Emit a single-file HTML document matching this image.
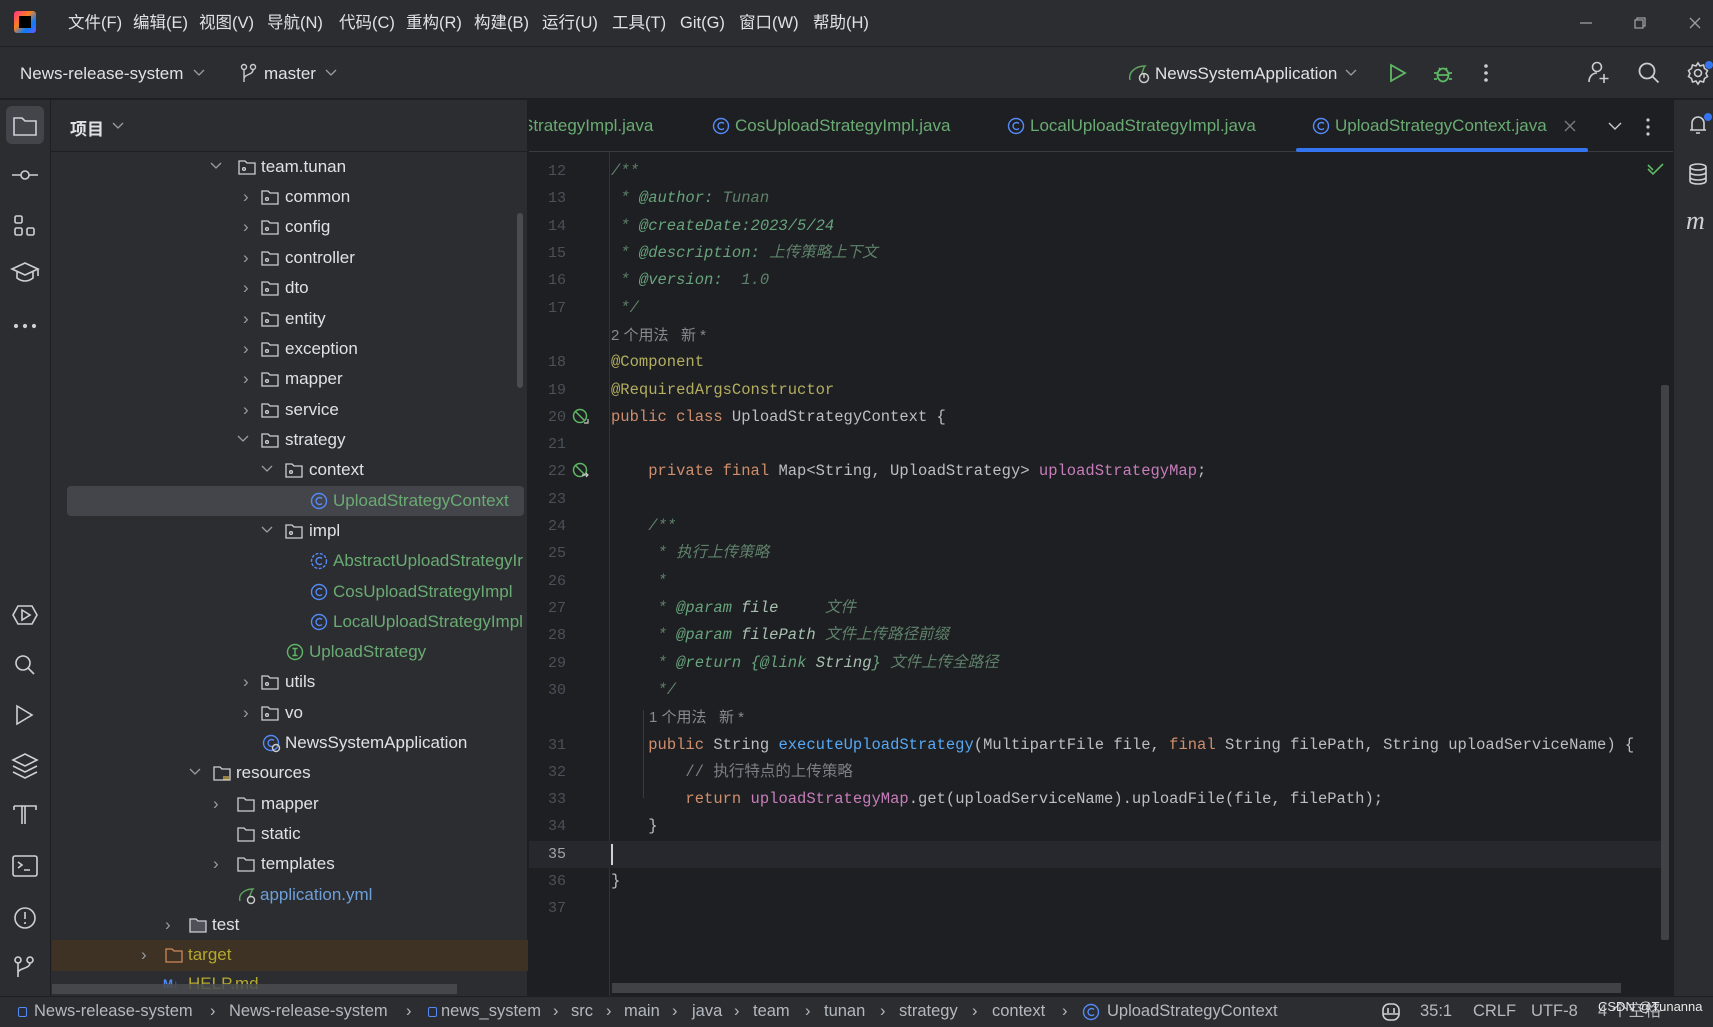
<!DOCTYPE html>
<html><head><meta charset="utf-8">
<style>
*{margin:0;padding:0;box-sizing:border-box}
body{width:1713px;height:1027px;overflow:hidden;background:#1e1f22;font-family:"Liberation Sans","Noto Sans CJK SC",sans-serif;color:#dfe1e5;position:relative}
.a{position:absolute}
.ui{font-size:16.5px;white-space:nowrap;line-height:24px;height:24px}
.row{position:absolute;height:30px;line-height:30px;font-size:17px;white-space:nowrap;color:#dfe1e5}
.chev{position:absolute;top:9px}
.fi{position:absolute;top:7px}
.code{position:absolute;left:611px;height:27px;line-height:27px;font-family:"Liberation Mono","Noto Sans CJK SC",monospace;font-size:15.5px;white-space:pre;color:#bcbec4}
.ln{position:absolute;left:520px;width:46px;text-align:right;height:27px;line-height:27px;font-family:"Liberation Mono",monospace;font-size:15px;color:#4b5059}
.k{color:#cf8e6d}.an{color:#b3ae60}.cm{color:#5f826b;font-style:italic}.tg{color:#67a37c;font-style:italic}.tv{color:#a8c0b0;font-style:italic}.f{color:#c77dbb}.m{color:#56a8f5}.gc{color:#7a7e85}
.hint{position:absolute;height:27px;line-height:27px;font-size:15px;color:#868a91;white-space:pre}
.g{color:#6aab73}
.sb{position:absolute;top:996px;height:31px;line-height:31px;font-size:16.5px;color:#b4b8bf;white-space:nowrap}
</style></head><body>
<!-- title bar -->
<div class="a" style="left:0;top:0;width:1713px;height:47px;background:#2b2d30;border-bottom:1px solid #1e1f22"></div>
<div class="a" style="left:14px;top:11px;width:22px;height:22px;background:linear-gradient(135deg,#ff318c,#fc801d 40%,#087cfa 70%,#6b57ff);border-radius:3px"><div style="position:absolute;left:5px;top:5px;width:12px;height:12px;background:#000"></div></div>
<div class="ui a" style="top:11px;left:68px">文件(F)</div>
<div class="ui a" style="top:11px;left:133px">编辑(E)</div>
<div class="ui a" style="top:11px;left:199px">视图(V)</div>
<div class="ui a" style="top:11px;left:267px">导航(N)</div>
<div class="ui a" style="top:11px;left:339px">代码(C)</div>
<div class="ui a" style="top:11px;left:406px">重构(R)</div>
<div class="ui a" style="top:11px;left:474px">构建(B)</div>
<div class="ui a" style="top:11px;left:542px">运行(U)</div>
<div class="ui a" style="top:11px;left:612px">工具(T)</div>
<div class="ui a" style="top:11px;left:680px">Git(G)</div>
<div class="ui a" style="top:11px;left:739px">窗口(W)</div>
<div class="ui a" style="top:11px;left:813px">帮助(H)</div>
<svg class="a" style="left:1578px;top:15px" width="130" height="16" fill="none" stroke="#9a9da3" stroke-width="1.3"><path d="M2 8h12"/><path d="M57 5h8v8h-8z M59 5v-2h8v8h-2"/><path d="M112 3l10 10M122 3l-10 10"/></svg>
<!-- toolbar -->
<div class="a" style="left:0;top:47px;width:1713px;height:52px;background:#2b2d30;border-bottom:1px solid #1e1f22"></div>
<div class="ui a" style="top:62px;left:20px;font-size:17px">News-release-system</div>
<svg class="a" style="left:193px;top:69px" width="12" height="8" fill="none" stroke="#9a9da3" stroke-width="1.3"><path d="M1 1l5 5 5-5"/></svg>
<svg class="a" style="left:240px;top:63px" width="18" height="20" fill="none" stroke="#c9ccd1" stroke-width="1.4"><circle cx="4" cy="4" r="2.5"/><circle cx="13" cy="4" r="2.5"/><path d="M4 7v12M13 7c0 5-9 4-9 9"/></svg>
<div class="ui a" style="top:62px;left:264px;font-size:17px">master</div>
<svg class="a" style="left:325px;top:69px" width="12" height="8" fill="none" stroke="#9a9da3" stroke-width="1.3"><path d="M1 1l5 5 5-5"/></svg>
<svg class="a" style="left:1127px;top:62px" width="24" height="22" fill="none" stroke="#5fa35f" stroke-width="1.5"><path d="M3 18c-2-8 6-14 15-14-2 2-2 6-4 9"/><circle cx="17" cy="16" r="4.5" stroke="#ccc"/><path d="M17 12v4" stroke="#ccc"/></svg>
<div class="ui a" style="top:62px;left:1155px;font-size:17px">NewsSystemApplication</div>
<svg class="a" style="left:1345px;top:69px" width="12" height="8" fill="none" stroke="#9a9da3" stroke-width="1.3"><path d="M1 1l5 5 5-5"/></svg>
<svg class="a" style="left:1388px;top:63px" width="20" height="20" fill="none" stroke="#5fb865" stroke-width="1.8"><path d="M3 2l14 8-14 8z"/></svg>
<svg class="a" style="left:1432px;top:62px" width="22" height="22" fill="none" stroke="#5fb865" stroke-width="1.8"><ellipse cx="11" cy="13" rx="5.5" ry="6.5"/><path d="M7 6l2 2M15 6l-2 2M2 11h3M17 11h3M2 17h3M17 17h3M5.5 13h11"/></svg>
<svg class="a" style="left:1482px;top:62px" width="8" height="22" fill="#c9ccd1"><circle cx="4" cy="4" r="1.8"/><circle cx="4" cy="11" r="1.8"/><circle cx="4" cy="18" r="1.8"/></svg>
<svg class="a" style="left:1587px;top:60px" width="24" height="26" fill="none" stroke="#c9ccd1" stroke-width="1.6"><circle cx="10" cy="7" r="4.5"/><path d="M2 22c0-6 4-9 8-9M17 14v9M12.5 18.5h9"/></svg>
<svg class="a" style="left:1637px;top:61px" width="24" height="24" fill="none" stroke="#c9ccd1" stroke-width="1.8"><circle cx="10" cy="10" r="7.5"/><path d="M15.5 15.5l6 6"/></svg>
<svg class="a" style="left:1686px;top:60px" width="27" height="26" fill="none" stroke="#c9ccd1" stroke-width="1.6"><circle cx="12" cy="13" r="3.5"/><path d="M12 3l2 3 3.5-1 1 3.5 3 2-1.5 3 1.5 3-3 2-1 3.5-3.5-1-2 3-2-3-3.5 1-1-3.5-3-2 1.5-3-1.5-3 3-2 1-3.5 3.5 1z"/><circle cx="23" cy="5" r="4" fill="#3574f0" stroke="none"/></svg>
<!-- left strip -->
<div class="a" style="left:0;top:100px;width:51px;height:896px;background:#2b2d30;border-right:1px solid #1e1f22"></div>
<div class="a" style="left:6px;top:106px;width:38px;height:38px;background:#43454a;border-radius:6px"></div>
<svg class="a" style="left:0;top:100px" width="50" height="896" fill="none" stroke="#ced0d6" stroke-width="1.6">
<path d="M14 18h8l3 3h11v14h-22z"/>
<path d="M12 75h9M29 75h9"/><circle cx="25" cy="75" r="4"/>
<rect x="15" y="116" width="7" height="7" rx="1.5"/><rect x="15" y="128" width="7" height="7" rx="1.5"/><rect x="27" y="128" width="7" height="7" rx="1.5"/>
<path d="M12 169l13-6 13 6-13 6zM17 172v6c5 4 11 4 16 0v-6M38 169v7"/>
<circle cx="16" cy="226" r="1.3" fill="#ced0d6"/><circle cx="25" cy="226" r="1.3" fill="#ced0d6"/><circle cx="34" cy="226" r="1.3" fill="#ced0d6"/>
<path d="M18 506h14l5 9-5 9h-14l-5-9z M22 510l8 5-8 5z"/>
<circle cx="23" cy="563" r="7"/><path d="M28 568l6 6"/>
<path d="M17 606l15 9-15 9z"/>
<path d="M13 660l12-6 12 6-12 6z M13 666l12 6 12-6M13 672l12 6 12-6"/>
<path d="M14 706h22v4M14 706v4M22 706v18M25 706v18"/>
<rect x="13" y="756" width="24" height="20" rx="2"/><path d="M18 762l4 3-4 3M24 770h6"/>
<circle cx="25" cy="818" r="10"/><path d="M25 812v7M25 822v2"/>
<circle cx="18" cy="860" r="3"/><circle cx="30" cy="860" r="3"/><path d="M18 863v14M30 863c0 6-12 5-12 10"/>
</svg>
<!-- project panel -->
<div class="a" style="left:51px;top:100px;width:477px;height:896px;background:#2b2d30;border-right:1px solid #1e1f22"></div>
<div class="a" style="left:70px;top:115px;font-size:17px;font-weight:bold">项目</div>
<svg class="a" style="left:112px;top:122px" width="12" height="8" fill="none" stroke="#9a9da3" stroke-width="1.3"><path d="M1 1l5 5 5-5"/></svg>
<div class="a" style="left:51px;top:151px;width:477px;height:1px;background:#1e1f22"></div>
<div class="a" style="left:67px;top:486px;width:457px;height:30px;background:#43454a;border-radius:4px"></div>
<div class="a" style="left:52px;top:940px;width:476px;height:31px;background:#3d3223"></div>
<div class="a" style="left:517px;top:213px;width:6px;height:175px;background:#4a4c50;border-radius:3px"></div>
<div class="row" style="top:152px;left:175px"><svg class="chev" style="left:35px" width="12" height="10" fill="none" stroke="#9a9da3" stroke-width="1.3"><path d="M1 2l5 5 5-5"/></svg><svg class="fi" style="left:63px" width="18" height="16" fill="none" stroke="#ced0d6" stroke-width="1.3"><path d="M1 2h6l2 2h8v11h-16z"/><circle cx="6" cy="10" r="1.4"/></svg><span style="position:absolute;left:86px">team.tunan</span></div>
<div class="row" style="top:182px;left:243px"><span class="chev" style="left:0;top:0;color:#9a9da3">›</span><svg class="fi" style="left:18px" width="18" height="16" fill="none" stroke="#ced0d6" stroke-width="1.3"><path d="M1 2h6l2 2h8v11h-16z"/><circle cx="6" cy="10" r="1.4"/></svg><span style="position:absolute;left:42px">common</span></div>
<div class="row" style="top:212px;left:243px"><span class="chev" style="left:0;top:0;color:#9a9da3">›</span><svg class="fi" style="left:18px" width="18" height="16" fill="none" stroke="#ced0d6" stroke-width="1.3"><path d="M1 2h6l2 2h8v11h-16z"/><circle cx="6" cy="10" r="1.4"/></svg><span style="position:absolute;left:42px">config</span></div>
<div class="row" style="top:243px;left:243px"><span class="chev" style="left:0;top:0;color:#9a9da3">›</span><svg class="fi" style="left:18px" width="18" height="16" fill="none" stroke="#ced0d6" stroke-width="1.3"><path d="M1 2h6l2 2h8v11h-16z"/><circle cx="6" cy="10" r="1.4"/></svg><span style="position:absolute;left:42px">controller</span></div>
<div class="row" style="top:273px;left:243px"><span class="chev" style="left:0;top:0;color:#9a9da3">›</span><svg class="fi" style="left:18px" width="18" height="16" fill="none" stroke="#ced0d6" stroke-width="1.3"><path d="M1 2h6l2 2h8v11h-16z"/><circle cx="6" cy="10" r="1.4"/></svg><span style="position:absolute;left:42px">dto</span></div>
<div class="row" style="top:304px;left:243px"><span class="chev" style="left:0;top:0;color:#9a9da3">›</span><svg class="fi" style="left:18px" width="18" height="16" fill="none" stroke="#ced0d6" stroke-width="1.3"><path d="M1 2h6l2 2h8v11h-16z"/><circle cx="6" cy="10" r="1.4"/></svg><span style="position:absolute;left:42px">entity</span></div>
<div class="row" style="top:334px;left:243px"><span class="chev" style="left:0;top:0;color:#9a9da3">›</span><svg class="fi" style="left:18px" width="18" height="16" fill="none" stroke="#ced0d6" stroke-width="1.3"><path d="M1 2h6l2 2h8v11h-16z"/><circle cx="6" cy="10" r="1.4"/></svg><span style="position:absolute;left:42px">exception</span></div>
<div class="row" style="top:364px;left:243px"><span class="chev" style="left:0;top:0;color:#9a9da3">›</span><svg class="fi" style="left:18px" width="18" height="16" fill="none" stroke="#ced0d6" stroke-width="1.3"><path d="M1 2h6l2 2h8v11h-16z"/><circle cx="6" cy="10" r="1.4"/></svg><span style="position:absolute;left:42px">mapper</span></div>
<div class="row" style="top:395px;left:243px"><span class="chev" style="left:0;top:0;color:#9a9da3">›</span><svg class="fi" style="left:18px" width="18" height="16" fill="none" stroke="#ced0d6" stroke-width="1.3"><path d="M1 2h6l2 2h8v11h-16z"/><circle cx="6" cy="10" r="1.4"/></svg><span style="position:absolute;left:42px">service</span></div>
<div class="row" style="top:425px;left:237px"><svg class="chev" style="left:0" width="12" height="10" fill="none" stroke="#9a9da3" stroke-width="1.3"><path d="M1 2l5 5 5-5"/></svg><svg class="fi" style="left:24px" width="18" height="16" fill="none" stroke="#ced0d6" stroke-width="1.3"><path d="M1 2h6l2 2h8v11h-16z"/><circle cx="6" cy="10" r="1.4"/></svg><span style="position:absolute;left:48px">strategy</span></div>
<div class="row" style="top:455px;left:261px"><svg class="chev" style="left:0" width="12" height="10" fill="none" stroke="#9a9da3" stroke-width="1.3"><path d="M1 2l5 5 5-5"/></svg><svg class="fi" style="left:24px" width="18" height="16" fill="none" stroke="#ced0d6" stroke-width="1.3"><path d="M1 2h6l2 2h8v11h-16z"/><circle cx="6" cy="10" r="1.4"/></svg><span style="position:absolute;left:48px">context</span></div>
<div class="row g" style="top:486px;left:310px"><svg class="fi" style="left:0;top:6px" width="18" height="18" fill="none" stroke="#548af7" stroke-width="1.4"><circle cx="9" cy="9" r="7.5"/><path d="M12 6.5a3.5 3.5 0 1 0 0 5"/></svg><span style="position:absolute;left:23px;color:#6aab73">UploadStrategyContext</span></div>
<div class="row" style="top:516px;left:261px"><svg class="chev" style="left:0" width="12" height="10" fill="none" stroke="#9a9da3" stroke-width="1.3"><path d="M1 2l5 5 5-5"/></svg><svg class="fi" style="left:24px" width="18" height="16" fill="none" stroke="#ced0d6" stroke-width="1.3"><path d="M1 2h6l2 2h8v11h-16z"/><circle cx="6" cy="10" r="1.4"/></svg><span style="position:absolute;left:48px">impl</span></div>
<div class="row" style="top:546px;left:310px"><svg class="fi" style="left:0;top:6px" width="18" height="18" fill="none" stroke="#548af7" stroke-width="1.4" stroke-dasharray="3 1.5"><circle cx="9" cy="9" r="7.5"/><path d="M12 6.5a3.5 3.5 0 1 0 0 5" stroke-dasharray="none"/></svg><span style="position:absolute;left:23px;color:#6aab73">AbstractUploadStrategyIr</span></div>
<div class="row" style="top:577px;left:310px"><svg class="fi" style="left:0;top:6px" width="18" height="18" fill="none" stroke="#548af7" stroke-width="1.4"><circle cx="9" cy="9" r="7.5"/><path d="M12 6.5a3.5 3.5 0 1 0 0 5"/></svg><span style="position:absolute;left:23px;color:#6aab73">CosUploadStrategyImpl</span></div>
<div class="row" style="top:607px;left:310px"><svg class="fi" style="left:0;top:6px" width="18" height="18" fill="none" stroke="#548af7" stroke-width="1.4"><circle cx="9" cy="9" r="7.5"/><path d="M12 6.5a3.5 3.5 0 1 0 0 5"/></svg><span style="position:absolute;left:23px;color:#6aab73">LocalUploadStrategyImpl</span></div>
<div class="row" style="top:637px;left:286px"><svg class="fi" style="left:0;top:6px" width="18" height="18" fill="none" stroke="#5fb865" stroke-width="1.4"><circle cx="9" cy="9" r="7.5"/><path d="M6.5 5.5h5M6.5 12.5h5M9 5.5v7"/></svg><span style="position:absolute;left:23px;color:#6aab73">UploadStrategy</span></div>
<div class="row" style="top:667px;left:243px"><span class="chev" style="left:0;top:0;color:#9a9da3">›</span><svg class="fi" style="left:18px" width="18" height="16" fill="none" stroke="#ced0d6" stroke-width="1.3"><path d="M1 2h6l2 2h8v11h-16z"/><circle cx="6" cy="10" r="1.4"/></svg><span style="position:absolute;left:42px">utils</span></div>
<div class="row" style="top:698px;left:243px"><span class="chev" style="left:0;top:0;color:#9a9da3">›</span><svg class="fi" style="left:18px" width="18" height="16" fill="none" stroke="#ced0d6" stroke-width="1.3"><path d="M1 2h6l2 2h8v11h-16z"/><circle cx="6" cy="10" r="1.4"/></svg><span style="position:absolute;left:42px">vo</span></div>
<div class="row" style="top:728px;left:262px"><svg class="fi" style="left:0;top:6px" width="20" height="20" fill="none" stroke="#548af7" stroke-width="1.4"><circle cx="9" cy="9" r="7.5"/><path d="M12 6.5a3.5 3.5 0 1 0 0 5"/><circle cx="14" cy="14" r="3.5" stroke="#ccc"/></svg><span style="position:absolute;left:23px">NewsSystemApplication</span></div>
<div class="row" style="top:758px;left:189px"><svg class="chev" style="left:0" width="12" height="10" fill="none" stroke="#9a9da3" stroke-width="1.3"><path d="M1 2l5 5 5-5"/></svg><svg class="fi" style="left:24px" width="18" height="17" fill="none" stroke="#ced0d6" stroke-width="1.3"><path d="M1 2h6l2 2h8v11h-16z"/><path d="M10 12h6M10 14h6" stroke="#d5b450"/></svg><span style="position:absolute;left:47px">resources</span></div>
<div class="row" style="top:789px;left:213px"><span class="chev" style="left:0;top:0;color:#9a9da3">›</span><svg class="fi" style="left:24px" width="18" height="16" fill="none" stroke="#ced0d6" stroke-width="1.3"><path d="M1 2h6l2 2h8v11h-16z"/></svg><span style="position:absolute;left:48px">mapper</span></div>
<div class="row" style="top:819px;left:213px"><svg class="fi" style="left:24px" width="18" height="16" fill="none" stroke="#ced0d6" stroke-width="1.3"><path d="M1 2h6l2 2h8v11h-16z"/></svg><span style="position:absolute;left:48px">static</span></div>
<div class="row" style="top:849px;left:213px"><span class="chev" style="left:0;top:0;color:#9a9da3">›</span><svg class="fi" style="left:24px" width="18" height="16" fill="none" stroke="#ced0d6" stroke-width="1.3"><path d="M1 2h6l2 2h8v11h-16z"/></svg><span style="position:absolute;left:48px">templates</span></div>
<div class="row" style="top:880px;left:237px"><svg class="fi" style="left:0;top:5px" width="20" height="20" fill="none" stroke="#5fa35f" stroke-width="1.4"><path d="M3 16c-2-7 5-12 13-12-2 2-2 6-4 8"/><circle cx="14" cy="15" r="3.5" stroke="#ccc"/></svg><span style="position:absolute;left:23px;color:#6e9fd8">application.yml</span></div>
<div class="row" style="top:910px;left:165px"><span class="chev" style="left:0;top:0;color:#9a9da3">›</span><svg class="fi" style="left:24px" width="18" height="16" fill="#4e5157" stroke="#ced0d6" stroke-width="1.3"><path d="M1 2h6l2 2h8v11h-16z"/></svg><span style="position:absolute;left:47px">test</span></div>
<div class="row" style="top:940px;left:141px"><span class="chev" style="left:0;top:0;color:#9a9da3">›</span><svg class="fi" style="left:24px" width="18" height="16" fill="#3d3223" stroke="#d0875a" stroke-width="1.3"><path d="M1 2h6l2 2h8v11h-16z"/></svg><span style="position:absolute;left:47px;color:#b5a830">target</span></div>
<div class="a" style="left:163px;top:973px;font-size:12px;font-weight:bold;color:#548af7;line-height:22px">M↓</div>
<div class="a" style="left:188px;top:973px;font-size:17px;color:#b5a830;line-height:22px">HELP.md</div>
<div class="a" style="left:52px;top:984px;width:405px;height:10px;background:#4a4c50;opacity:0.85"></div>
<!-- tabs -->
<div class="a" style="left:529px;top:100px;width:1144px;height:52px;background:#1e1f22;border-bottom:1px solid #393b40"></div>
<div class="a ui" style="left:529px;top:114px;width:130px;overflow:hidden;font-size:17px;color:#6aab73"><span style="margin-left:-7px">StrategyImpl.java</span></div>
<svg class="a" style="left:712px;top:117px" width="18" height="18" fill="none" stroke="#548af7" stroke-width="1.4"><circle cx="9" cy="9" r="7.5"/><path d="M12 6.5a3.5 3.5 0 1 0 0 5"/></svg>
<div class="a ui" style="left:735px;top:114px;font-size:17px;color:#6aab73">CosUploadStrategyImpl.java</div>
<svg class="a" style="left:1007px;top:117px" width="18" height="18" fill="none" stroke="#548af7" stroke-width="1.4"><circle cx="9" cy="9" r="7.5"/><path d="M12 6.5a3.5 3.5 0 1 0 0 5"/></svg>
<div class="a ui" style="left:1030px;top:114px;font-size:17px;color:#6aab73">LocalUploadStrategyImpl.java</div>
<svg class="a" style="left:1312px;top:117px" width="18" height="18" fill="none" stroke="#548af7" stroke-width="1.4"><circle cx="9" cy="9" r="7.5"/><path d="M12 6.5a3.5 3.5 0 1 0 0 5"/></svg>
<div class="a ui" style="left:1335px;top:114px;font-size:17px;color:#6aab73">UploadStrategyContext.java</div>
<svg class="a" style="left:1564px;top:120px" width="12" height="12" fill="none" stroke="#7a7e85" stroke-width="1.3"><path d="M1 1l10 10M11 1l-10 10"/></svg>
<div class="a" style="left:1296px;top:148px;width:292px;height:4px;background:#3574f0;border-radius:2px"></div>
<svg class="a" style="left:1608px;top:122px" width="14" height="9" fill="none" stroke="#c9ccd1" stroke-width="1.4"><path d="M1 1l6 6 6-6"/></svg>
<svg class="a" style="left:1645px;top:117px" width="6" height="20" fill="#c9ccd1"><circle cx="3" cy="3" r="1.6"/><circle cx="3" cy="10" r="1.6"/><circle cx="3" cy="17" r="1.6"/></svg>
<svg class="a" style="left:1647px;top:163px" width="18" height="14" fill="none" stroke="#5fb865" stroke-width="1.6"><path d="M1 6l5 5 10-10M1 2l5 5"/></svg>
<!-- gutter line -->
<div class="a" style="left:609px;top:152px;width:1px;height:844px;background:#313438"></div>
<!-- current line -->
<div class="a" style="left:529px;top:841px;width:1135px;height:27px;background:#26282e"></div>
<div class="a" style="left:611px;top:844px;width:2px;height:21px;background:#ced0d6"></div>
<!-- scrollbars -->
<div class="a" style="left:1661px;top:385px;width:8px;height:555px;background:#404246;border-radius:2px"></div>
<div class="a" style="left:612px;top:983px;width:1009px;height:10px;background:#404246"></div>
<div class="a" style="left:643px;top:710px;width:1px;height:88px;background:#393b40"></div>
<!-- code -->
<div class="ln" style="top:158px">12</div><div class="code cm" style="top:158px">/**</div>
<div class="ln" style="top:185px">13</div><div class="code cm" style="top:185px"> * <span class="tg">@author:</span> Tunan</div>
<div class="ln" style="top:213px">14</div><div class="code cm" style="top:213px"> * <span class="tg">@createDate:2023/5/24</span></div>
<div class="ln" style="top:240px">15</div><div class="code cm" style="top:240px"> * <span class="tg">@description:</span> 上传策略上下文</div>
<div class="ln" style="top:267px">16</div><div class="code cm" style="top:267px"> * <span class="tg">@version:</span>  1.0</div>
<div class="ln" style="top:295px">17</div><div class="code cm" style="top:295px"> */</div>
<div class="hint" style="top:322px;left:611px">2 个用法   新 *</div>
<div class="ln" style="top:349px">18</div><div class="code an" style="top:349px">@Component</div>
<div class="ln" style="top:377px">19</div><div class="code an" style="top:377px">@RequiredArgsConstructor</div>
<div class="ln" style="top:404px">20</div><div class="code" style="top:404px"><span class="k">public class</span> UploadStrategyContext {</div>
<div class="ln" style="top:431px">21</div>
<div class="ln" style="top:458px">22</div><div class="code" style="top:458px">    <span class="k">private final</span> Map&lt;String, UploadStrategy&gt; <span class="f">uploadStrategyMap</span>;</div>
<div class="ln" style="top:486px">23</div>
<div class="ln" style="top:513px">24</div><div class="code cm" style="top:513px">    /**</div>
<div class="ln" style="top:540px">25</div><div class="code cm" style="top:540px">     * 执行上传策略</div>
<div class="ln" style="top:568px">26</div><div class="code cm" style="top:568px">     *</div>
<div class="ln" style="top:595px">27</div><div class="code cm" style="top:595px">     * <span class="tg">@param</span> <span class="tv">file</span>     文件</div>
<div class="ln" style="top:622px">28</div><div class="code cm" style="top:622px">     * <span class="tg">@param</span> <span class="tv">filePath</span> 文件上传路径前缀</div>
<div class="ln" style="top:650px">29</div><div class="code cm" style="top:650px">     * <span class="tg">@return</span> <span class="tg">{@link</span> <span class="tv">String</span><span class="tg">}</span> 文件上传全路径</div>
<div class="ln" style="top:677px">30</div><div class="code cm" style="top:677px">     */</div>
<div class="hint" style="top:704px;left:649px">1 个用法   新 *</div>
<div class="ln" style="top:732px">31</div><div class="code" style="top:732px">    <span class="k">public</span> String <span class="m">executeUploadStrategy</span>(MultipartFile file, <span class="k">final</span> String filePath, String uploadServiceName) {</div>
<div class="ln" style="top:759px">32</div><div class="code gc" style="top:759px">        // 执行特点的上传策略</div>
<div class="ln" style="top:786px">33</div><div class="code" style="top:786px">        <span class="k">return</span> <span class="f">uploadStrategyMap</span>.get(uploadServiceName).uploadFile(file, filePath);</div>
<div class="ln" style="top:813px">34</div><div class="code" style="top:813px">    }</div>
<div class="ln" style="top:841px;color:#a1a3ab">35</div>
<div class="ln" style="top:868px">36</div><div class="code" style="top:868px">}</div>
<div class="ln" style="top:895px">37</div>
<svg class="a" style="left:572px;top:408px" width="18" height="18" fill="none" stroke="#5fb865" stroke-width="1.5"><circle cx="8" cy="8" r="6.5"/><path d="M3.5 3.5l9 9"/><path d="M12 15h4v-4" stroke="#ccc" stroke-width="1.2"/></svg>
<svg class="a" style="left:572px;top:462px" width="18" height="18" fill="none" stroke="#5fb865" stroke-width="1.5"><circle cx="8" cy="8" r="6.5"/><path d="M3.5 3.5l9 9"/><path d="M10 13h6M14 11l2 2-2 2" stroke="#ccc" stroke-width="1.2"/></svg>
<!-- right strip -->
<div class="a" style="left:1673px;top:100px;width:40px;height:896px;background:#2b2d30;border-left:1px solid #1e1f22"></div>
<svg class="a" style="left:1687px;top:112px" width="26" height="130" fill="none" stroke="#ced0d6" stroke-width="1.6"><path d="M3 18h16M5 18v-7a6 6 0 0 1 12 0v7M9 21h4"/><circle cx="21" cy="5" r="4" fill="#3574f0" stroke="none"/><ellipse cx="11" cy="55" rx="8" ry="3"/><path d="M3 55v14c0 4 16 4 16 0v-14M3 60c0 4 16 4 16 0M3 65c0 4 16 4 16 0"/></svg>
<div class="a" style="left:1686px;top:206px;font-size:26px;font-style:italic;color:#ced0d6;font-family:'Liberation Serif',serif">m</div>
<!-- status bar -->
<div class="a" style="left:0;top:996px;width:1713px;height:31px;background:#2b2d30;border-top:1px solid #1e1f22"></div>
<div class="a" style="left:18px;top:1007px;width:9px;height:10px;border:1.5px solid #548af7;border-radius:2px"></div>
<div class="sb" style="left:34px">News-release-system</div>
<div class="sb" style="left:210px">›</div>
<div class="sb" style="left:229px">News-release-system</div>
<div class="sb" style="left:406px">›</div>
<div class="a" style="left:428px;top:1007px;width:9px;height:10px;border:1.5px solid #548af7;border-radius:2px"></div>
<div class="sb" style="left:441px">news_system</div>
<div class="sb" style="left:553px">›</div>
<div class="sb" style="left:571px">src</div>
<div class="sb" style="left:606px">›</div>
<div class="sb" style="left:624px">main</div>
<div class="sb" style="left:672px">›</div>
<div class="sb" style="left:692px">java</div>
<div class="sb" style="left:734px">›</div>
<div class="sb" style="left:753px">team</div>
<div class="sb" style="left:805px">›</div>
<div class="sb" style="left:824px">tunan</div>
<div class="sb" style="left:880px">›</div>
<div class="sb" style="left:899px">strategy</div>
<div class="sb" style="left:972px">›</div>
<div class="sb" style="left:992px">context</div>
<div class="sb" style="left:1062px">›</div>
<svg class="a" style="left:1082px;top:1003px" width="18" height="18" fill="none" stroke="#548af7" stroke-width="1.4"><circle cx="9" cy="9" r="7.5"/><path d="M12 6.5a3.5 3.5 0 1 0 0 5"/></svg>
<div class="sb" style="left:1107px">UploadStrategyContext</div>
<svg class="a" style="left:1380px;top:1002px" width="22" height="20" fill="none" stroke="#ced0d6" stroke-width="1.6"><rect x="3" y="2" width="16" height="16" rx="6"/><path d="M8 6v5M14 6v5M3 12h16"/></svg>
<div class="sb" style="left:1420px">35:1</div>
<div class="sb" style="left:1473px">CRLF</div>
<div class="sb" style="left:1531px">UTF-8</div>
<div class="sb" style="left:1598px">4 个空格</div>
<div class="sb" style="left:1598px;font-size:13px;color:#e8e8e8;top:991px">CSDN @Tunanna</div>
</body></html>
